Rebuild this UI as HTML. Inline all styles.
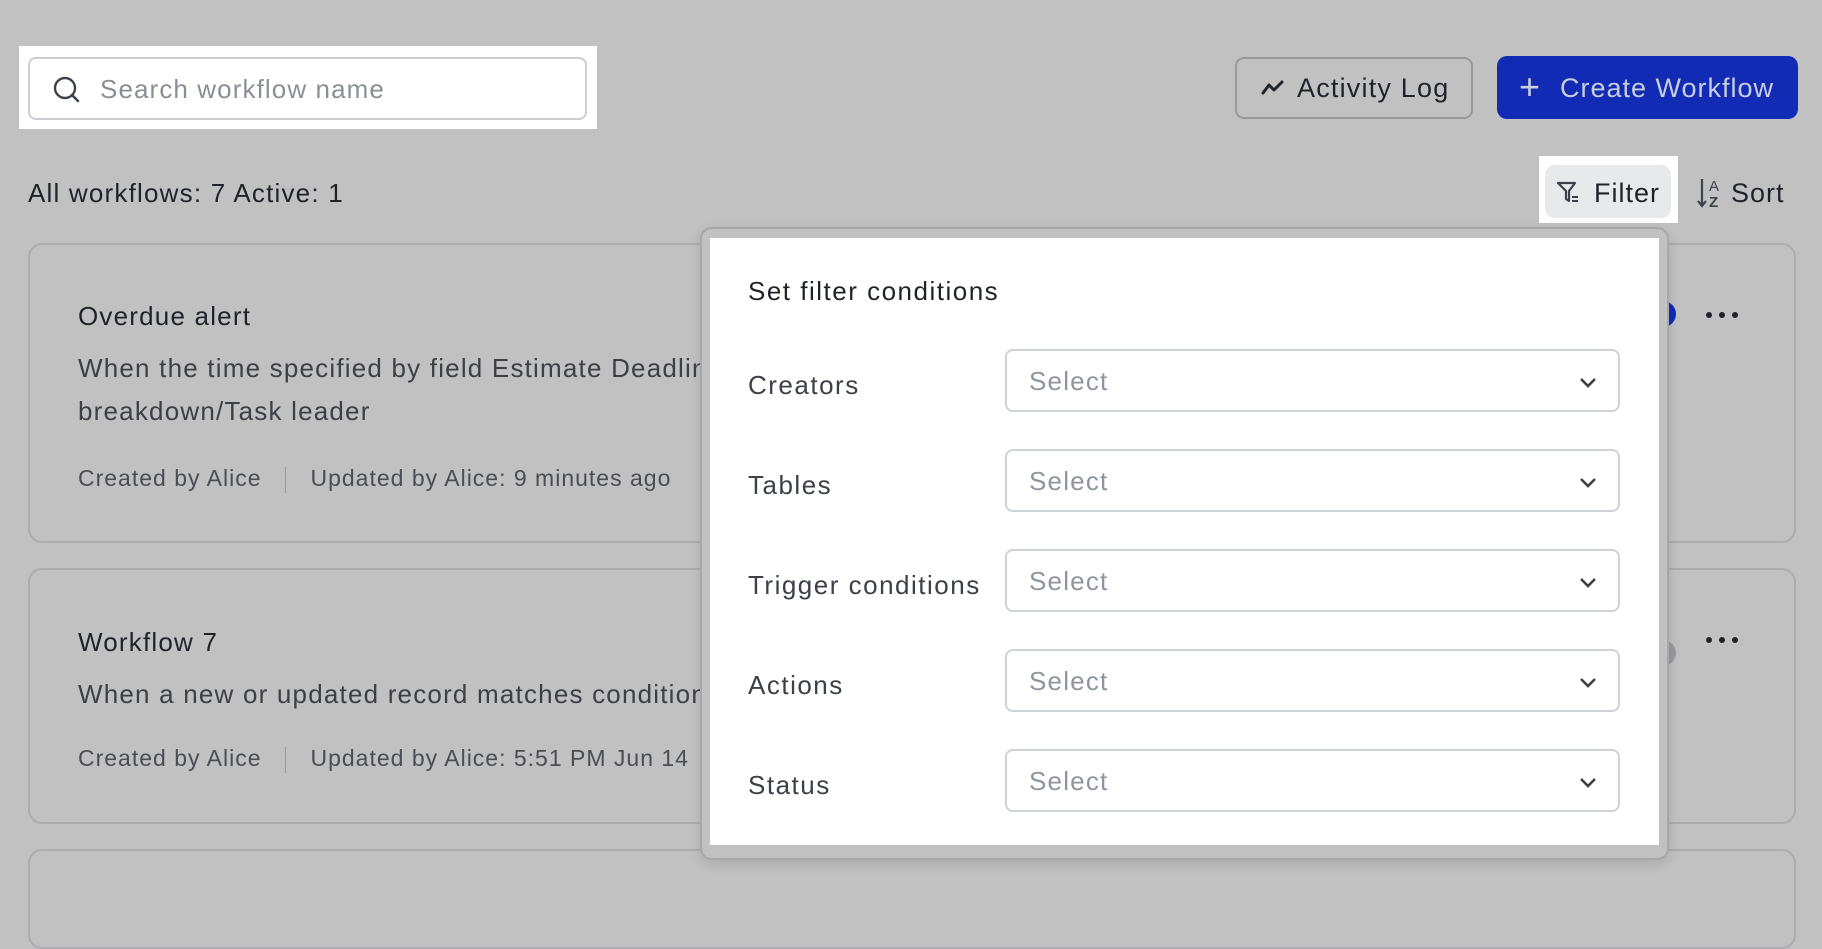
<!DOCTYPE html>
<html><head><style>
*{box-sizing:border-box;margin:0;padding:0}
body{width:1822px;height:886px;background:#c1c1c1;font-family:"Liberation Sans",sans-serif;position:relative;overflow:hidden;color:#1f2329}
.abs{position:absolute}
.card{position:absolute;left:28px;width:1768px;border:2px solid #adadb0;border-radius:14px;background:#c1c1c1}
.t{position:absolute;left:48px;font-size:26px;letter-spacing:1.2px;color:#1f2329;white-space:nowrap}
.d{position:absolute;left:48px;font-size:26px;letter-spacing:1.2px;color:#3c3f44;white-space:nowrap;line-height:43px}
.m{position:absolute;left:48px;font-size:23px;letter-spacing:1px;color:#4a4d52;white-space:nowrap}
.m span{display:inline-block;width:1px;height:26px;background:#9a9a9a;margin:0 24px;vertical-align:middle}
.dots{position:absolute;left:1676px;top:60px}
.dots i{display:inline-block;width:6px;height:6px;border-radius:50%;background:#1f2329;margin-right:7px}
.lbl{position:absolute;left:748px;font-size:26px;letter-spacing:1.5px;color:#3c4048}
.sel{position:absolute;left:1005px;width:615px;height:63px;border:2px solid #d0d3d6;border-radius:8px;background:#fff}
.sel .p{position:absolute;left:22px;top:15px;font-size:26px;letter-spacing:1.2px;color:#8f959e}
.sel svg{position:absolute;right:20px;top:24px}
</style></head><body>
<div class="abs" style="left:19px;top:46px;width:578px;height:83px;background:#fff"></div>
<div class="abs" style="left:28px;top:57px;width:559px;height:63px;border:2px solid #ccced1;border-radius:8px;background:#fff">
<svg class="abs" style="left:22px;top:16px" width="30" height="30" viewBox="0 0 30 30"><circle cx="13" cy="13" r="10" fill="none" stroke="#3c4048" stroke-width="2.4"/><path d="M20 20l6 6" stroke="#3c4048" stroke-width="2.6" stroke-linecap="round"/></svg>
<div class="abs" style="left:70px;top:15px;font-size:26px;letter-spacing:1.1px;color:#8a8f96">Search workflow name</div></div>

<div class="abs" style="left:1235px;top:57px;width:238px;height:62px;border:2px solid #9a9a9a;border-radius:9px"></div>
<svg class="abs" style="left:1260px;top:78px" width="26" height="20" viewBox="0 0 26 20"><path d="M3 15l6-8 5 5 8-8" fill="none" stroke="#1f2329" stroke-width="3" stroke-linecap="round" stroke-linejoin="round"/></svg>
<div class="abs" style="left:1297px;top:73px;font-size:27px;letter-spacing:1.2px;color:#1f2329">Activity Log</div>

<div class="abs" style="left:1497px;top:56px;width:301px;height:63px;background:#112bb5;border-radius:10px"></div>
<div class="abs" style="left:1519px;top:66px;font-size:36px;color:#c8cde0;font-weight:300">+</div>
<div class="abs" style="left:1560px;top:73px;font-size:27px;letter-spacing:1px;color:#c8cde0">Create Workflow</div>

<div class="abs" style="left:28px;top:178px;font-size:26px;letter-spacing:1.2px;color:#1f2329">All workflows: 7 Active: 1</div>

<div class="abs" style="left:1539px;top:156px;width:139px;height:67px;background:#fff"></div>
<div class="abs" style="left:1545px;top:165px;width:126px;height:53px;background:#e8e9ea;border-radius:10px"></div>
<svg class="abs" style="left:1556px;top:180px" width="26" height="26" viewBox="0 0 26 26"><path d="M2 3h17l-6 8v10l-3-2v-8z" fill="none" stroke="#3c4048" stroke-width="2.2" stroke-linejoin="round"/><path d="M16 17h6M16 21h6" stroke="#3c4048" stroke-width="2"/></svg>
<div class="abs" style="left:1594px;top:178px;font-size:27px;letter-spacing:1px;color:#1f2329">Filter</div>
<svg class="abs" style="left:1697px;top:176px" width="28" height="34" viewBox="0 0 28 34"><path d="M5 3v27M1 25l4 5 4-5" fill="none" stroke="#3c4048" stroke-width="2.2"/><text x="12" y="15" font-size="15" font-family="Liberation Sans" fill="#3c4048">A</text><text x="12" y="31" font-size="15" font-family="Liberation Sans" font-weight="bold" fill="#3c4048">Z</text></svg>
<div class="abs" style="left:1731px;top:178px;font-size:27px;letter-spacing:1px;color:#1f2329">Sort</div>

<div class="card" style="top:243px;height:300px">
<div class="t" style="top:56px">Overdue alert</div>
<div class="d" style="top:102px">When the time specified by field Estimate Deadline<br>breakdown/Task leader</div>
<div class="m" style="top:220px">Created by Alice<span></span>Updated by Alice: 9 minutes ago</div>
<div class="abs" style="left:1620px;top:56px;width:26px;height:26px;border-radius:50%;background:#112bb5"></div>
<div class="dots"><i></i><i></i><i></i></div>
</div>
<div class="card" style="top:568px;height:256px">
<div class="t" style="top:57px">Workflow 7</div>
<div class="d" style="top:103px">When a new or updated record matches conditions</div>
<div class="m" style="top:175px">Created by Alice<span></span>Updated by Alice: 5:51 PM Jun 14</div>
<div class="abs" style="left:1620px;top:70px;width:26px;height:26px;border-radius:50%;background:#9a9b9e"></div>
<div class="dots"><i></i><i></i><i></i></div>
</div>
<div class="card" style="top:849px;height:100px"></div>

<div class="abs" style="left:700px;top:227px;width:969px;height:633px;background:#c1c1c1;border:2px solid #a8a8ab;border-radius:12px;box-shadow:0 4px 12px rgba(0,0,0,.12)"></div>
<div class="abs" style="left:710px;top:238px;width:949px;height:607px;background:#fff"></div>
<div class="abs" style="left:748px;top:276px;font-size:26px;letter-spacing:1.5px;color:#1f2329">Set filter conditions</div>

<div class="lbl" style="top:370px">Creators</div>
<div class="lbl" style="top:470px">Tables</div>
<div class="lbl" style="top:570px">Trigger conditions</div>
<div class="lbl" style="top:670px">Actions</div>
<div class="lbl" style="top:770px">Status</div>

<div class="sel" style="top:349px"><div class="p">Select</div><svg width="20" height="14" viewBox="0 0 20 14"><path d="M3 4l7 7 7-7" fill="none" stroke="#3c4048" stroke-width="2.6"/></svg></div>
<div class="sel" style="top:449px"><div class="p">Select</div><svg width="20" height="14" viewBox="0 0 20 14"><path d="M3 4l7 7 7-7" fill="none" stroke="#3c4048" stroke-width="2.6"/></svg></div>
<div class="sel" style="top:549px"><div class="p">Select</div><svg width="20" height="14" viewBox="0 0 20 14"><path d="M3 4l7 7 7-7" fill="none" stroke="#3c4048" stroke-width="2.6"/></svg></div>
<div class="sel" style="top:649px"><div class="p">Select</div><svg width="20" height="14" viewBox="0 0 20 14"><path d="M3 4l7 7 7-7" fill="none" stroke="#3c4048" stroke-width="2.6"/></svg></div>
<div class="sel" style="top:749px"><div class="p">Select</div><svg width="20" height="14" viewBox="0 0 20 14"><path d="M3 4l7 7 7-7" fill="none" stroke="#3c4048" stroke-width="2.6"/></svg></div>
</body></html>
